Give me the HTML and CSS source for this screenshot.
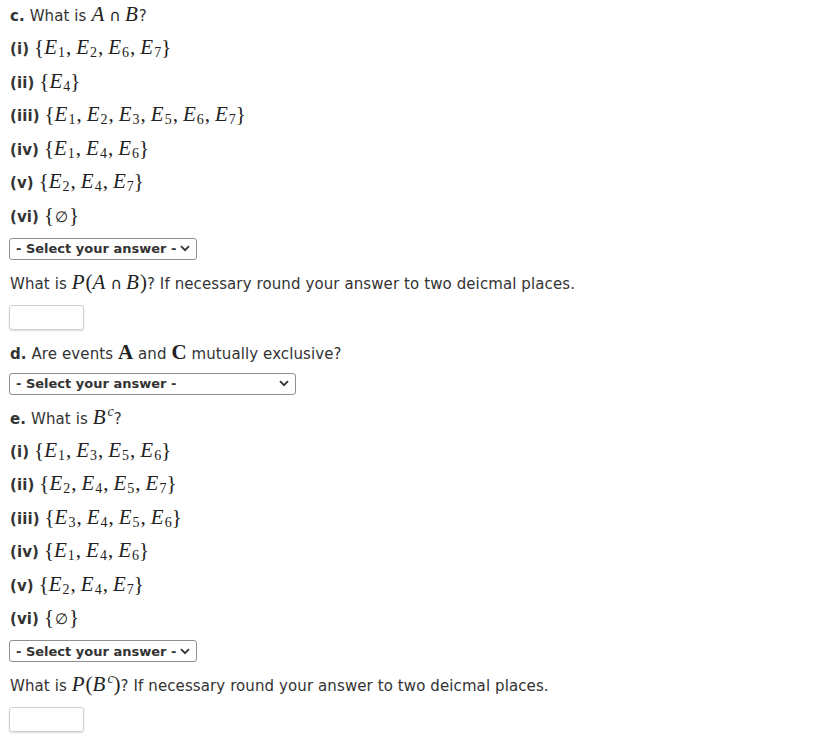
FILE: index.html
```html
<!DOCTYPE html>
<html>
<head>
<meta charset="utf-8">
<link rel="stylesheet" href="styles.css">
</head>
<body>
<div class="page">
  <p class="q"><b>c.</b> What is <span class="m"><i>A</i><span class="op">∩</span><i>B</i></span>?</p>
  <p class="opt"><b>(i)</b> <span class="m">{<i>E</i><sub>1</sub><span class="c">,</span><i>E</i><sub>2</sub><span class="c">,</span><i>E</i><sub>6</sub><span class="c">,</span><i>E</i><sub>7</sub>}</span></p>
  <p class="opt"><b>(ii)</b> <span class="m">{<i>E</i><sub>4</sub>}</span></p>
  <p class="opt"><b>(iii)</b> <span class="m">{<i>E</i><sub>1</sub><span class="c">,</span><i>E</i><sub>2</sub><span class="c">,</span><i>E</i><sub>3</sub><span class="c">,</span><i>E</i><sub>5</sub><span class="c">,</span><i>E</i><sub>6</sub><span class="c">,</span><i>E</i><sub>7</sub>}</span></p>
  <p class="opt"><b>(iv)</b> <span class="m">{<i>E</i><sub>1</sub><span class="c">,</span><i>E</i><sub>4</sub><span class="c">,</span><i>E</i><sub>6</sub>}</span></p>
  <p class="opt"><b>(v)</b> <span class="m">{<i>E</i><sub>2</sub><span class="c">,</span><i>E</i><sub>4</sub><span class="c">,</span><i>E</i><sub>7</sub>}</span></p>
  <p class="opt last"><b>(vi)</b> <span class="m">{<span class="empty">∅</span>}</span></p>
  <div class="sel short"><span>- Select your answer -</span><svg width="10" height="7" viewBox="0 0 10 7"><path d="M1 1.2 L5 5.2 L9 1.2" fill="none" stroke="#333" stroke-width="1.8"/></svg></div>
  <p class="q">What is <span class="m"><i>P</i>(<i>A</i><span class="op">∩</span><i>B</i>)</span>? If necessary round your answer to two deicmal places.</p>
  <div class="inp"></div>
  <p class="q d"><b>d.</b> Are events <span class="m bf">A</span> and <span class="m bf">C</span> mutually exclusive?</p>
  <div class="sel long"><span>- Select your answer -</span><svg width="10" height="7" viewBox="0 0 10 7"><path d="M1 1.2 L5 5.2 L9 1.2" fill="none" stroke="#333" stroke-width="1.8"/></svg></div>
  <p class="q"><b>e.</b> What is <span class="m"><i>B</i><sup>c</sup></span>?</p>
  <p class="opt"><b>(i)</b> <span class="m">{<i>E</i><sub>1</sub><span class="c">,</span><i>E</i><sub>3</sub><span class="c">,</span><i>E</i><sub>5</sub><span class="c">,</span><i>E</i><sub>6</sub>}</span></p>
  <p class="opt"><b>(ii)</b> <span class="m">{<i>E</i><sub>2</sub><span class="c">,</span><i>E</i><sub>4</sub><span class="c">,</span><i>E</i><sub>5</sub><span class="c">,</span><i>E</i><sub>7</sub>}</span></p>
  <p class="opt"><b>(iii)</b> <span class="m">{<i>E</i><sub>3</sub><span class="c">,</span><i>E</i><sub>4</sub><span class="c">,</span><i>E</i><sub>5</sub><span class="c">,</span><i>E</i><sub>6</sub>}</span></p>
  <p class="opt"><b>(iv)</b> <span class="m">{<i>E</i><sub>1</sub><span class="c">,</span><i>E</i><sub>4</sub><span class="c">,</span><i>E</i><sub>6</sub>}</span></p>
  <p class="opt"><b>(v)</b> <span class="m">{<i>E</i><sub>2</sub><span class="c">,</span><i>E</i><sub>4</sub><span class="c">,</span><i>E</i><sub>7</sub>}</span></p>
  <p class="opt last"><b>(vi)</b> <span class="m">{<span class="empty">∅</span>}</span></p>
  <div class="sel short"><span>- Select your answer -</span><svg width="10" height="7" viewBox="0 0 10 7"><path d="M1 1.2 L5 5.2 L9 1.2" fill="none" stroke="#333" stroke-width="1.8"/></svg></div>
  <p class="q">What is <span class="m"><i>P</i>(<i>B</i><sup>c</sup>)</span>? If necessary round your answer to two deicmal places.</p>
  <div class="inp"></div>
</div>
</body>
</html>
```
FILE: styles.css
```css
body {
  margin: 0;
  background: #fff;
  color: #333;
  font-family: "DejaVu Sans", Verdana, sans-serif;
  font-size: 15px;
}
.page {
  padding: 4px 9px 0 9px;
  display: flex;
  flex-direction: column;
  align-items: flex-start;
}
p {
  margin: 0;
  line-height: 20px;
  height: 20px;
  white-space: nowrap;
  letter-spacing: 0.1px;
}
.q { margin-bottom: 13px; padding-left: 1px; }
.opt { margin-bottom: 13.5px; padding-left: 1px; }
.opt.last { margin-bottom: 13px; }
.d { margin-bottom: 11px; }
b { font-weight: bold; }
.m {
  font-family: "Liberation Serif", "Times New Roman", serif;
  font-size: 21px;
  color: #222;
  letter-spacing: 0;
}
.m i { font-style: italic; padding-right: 1px; }
.m sub {
  font-size: 14px;
  vertical-align: -3px;
  line-height: 0;
}
.m sup {
  font-size: 14px;
  font-style: italic;
  vertical-align: 8px;
  line-height: 0;
  padding-left: 1px;
}
.m .c { margin-left: 1px; margin-right: 5px; }
.m .op {
  font-family: "DejaVu Sans", sans-serif;
  font-size: 16px;
  margin: 0 4px;
}
.bf { font-weight: bold; }
.empty { font-family: "DejaVu Sans", sans-serif; font-size: 15px; padding: 0 1px; }
.sel {
  box-sizing: border-box;
  height: 22px;
  border: 1px solid #8f8f8f;
  border-radius: 3px;
  display: flex;
  align-items: center;
  justify-content: space-between;
  padding: 0 6px 0 6px;
  font-size: 13px;
  font-weight: bold;
  color: #333;
  margin-bottom: 12px;
}
.sel.short { width: 188px; }
.sel.long { width: 287px; }
.inp {
  box-sizing: border-box;
  width: 75px;
  height: 25px;
  border: 1px solid #d0d0d0;
  border-radius: 3px;
  box-shadow: 0 1px 2px rgba(0,0,0,0.15);
  margin-bottom: 12px;
}
```
